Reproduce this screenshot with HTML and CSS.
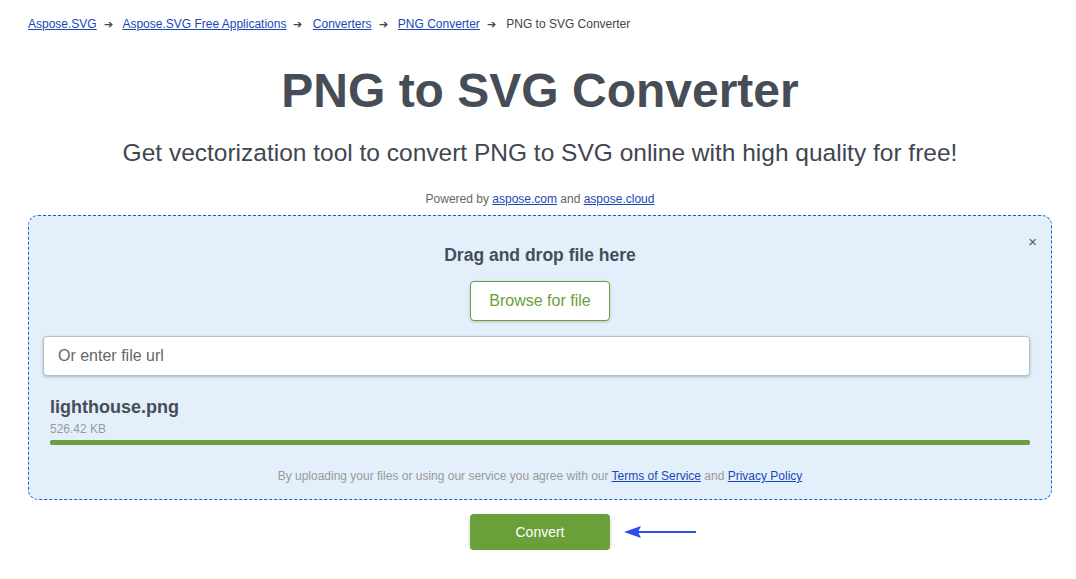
FILE: index.html
```html
<!DOCTYPE html>
<html lang="en">
<head>
  <meta charset="UTF-8">
  <meta name="viewport" content="width=device-width, initial-scale=1.0">
  <title>PNG to SVG Converter</title>
  <link rel="stylesheet" href="styles.css">
</head>
<body>
  <div class="page">
    <nav class="breadcrumbs">
      <a href="#">Aspose.SVG</a><span class="sep">&#x2794;</span>
      <a href="#">Aspose.SVG Free Applications</a><span class="sep">&#x2794;</span>
      <a href="#">Converters</a><span class="sep">&#x2794;</span>
      <a href="#">PNG Converter</a><span class="sep">&#x2794;</span>
      <span class="current">PNG to SVG Converter</span>
    </nav>

    <h1 class="title">PNG to SVG Converter</h1>
    <h2 class="subtitle">Get vectorization tool to convert PNG to SVG online with high quality for free!</h2>
    <div class="powered">Powered by <a href="#">aspose.com</a> and <a href="#">aspose.cloud</a></div>

    <div class="dropzone">
      <span class="close">&times;</span>
      <div class="drop-label">Drag and drop file here</div>
      <button class="browse">Browse for file</button>
      <input class="url-input" type="text" placeholder="Or enter file url">
      <div class="file">
        <div class="file-name">lighthouse.png</div>
        <div class="file-size">526.42 KB</div>
        <div class="progress"><div class="progress-fill" style="width: 100%"></div></div>
      </div>
      <div class="terms">By uploading your files or using our service you agree with our <a href="#">Terms of Service</a> and <a href="#">Privacy Policy</a></div>
    </div>

    <div class="actions">
      <button class="convert">Convert</button>
      <svg class="pointer" width="74" height="14" viewBox="0 0 74 14">
        <line x1="14" y1="7" x2="72" y2="7" stroke="#2e4df0" stroke-width="2"/>
        <polygon points="0,7 17,1 14,7 17,13" fill="#2e4df0"/>
      </svg>
    </div>
  </div>
</body>
</html>
```

FILE: styles.css
```css
body {
  margin: 0;
  font-family: "Liberation Sans", Arial, sans-serif;
  color: #40464d;
  background: #fff;
}
a {
  color: #1a47b8;
}
.page {
  width: 1024px;
  padding: 16px 0 0 28px;
}
.breadcrumbs {
  font-size: 12px;
  color: #444;
  line-height: 16px;
}
.breadcrumbs .sep {
  margin: 0 7px;
  font-size: 11px;
  color: #444;
}
.title {
  margin: 31px 0 0;
  text-align: center;
  font-size: 48px;
  line-height: 56px;
  font-weight: bold;
  color: #474d57;
}
.subtitle {
  margin: 19px 0 0;
  text-align: center;
  font-size: 24.5px;
  line-height: 30px;
  font-weight: normal;
  color: #3f4650;
}
.powered {
  margin-top: 23px;
  text-align: center;
  font-size: 12px;
  line-height: 16px;
  color: #666;
}
.dropzone {
  position: relative;
  margin-top: 8px;
  border: 1px dashed #1565c0;
  border-radius: 10px;
  background: #e3f0fc;
  padding: 28px 14px 15px 14px;
  display: flex;
  flex-direction: column;
  align-items: center;
}
.close {
  position: absolute;
  top: 17px;
  right: 14px;
  font-size: 15px;
  color: #555a60;
}
.drop-label {
  font-size: 17.5px;
  font-weight: bold;
  line-height: 22px;
  color: #474d57;
}
.browse {
  margin-top: 15px;
  width: 140px;
  height: 40px;
  background: #fff;
  border: 1px solid #6a9f3a;
  border-radius: 4px;
  box-shadow: 0 1px 3px rgba(0, 0, 0, 0.2);
  color: #6a9f3a;
  font-family: inherit;
  font-size: 16px;
}
.url-input {
  box-sizing: border-box;
  align-self: flex-start;
  margin-top: 15px;
  width: 987px;
  height: 40px;
  padding: 0 14px;
  background: #fff;
  border: 1px solid #b9bec4;
  border-radius: 4px;
  box-shadow: 0 1px 3px rgba(0, 0, 0, 0.25);
  font-family: inherit;
  font-size: 16px;
}
.url-input::placeholder {
  color: #666;
}
.file {
  align-self: flex-start;
  width: 980px;
  margin: 20px 0 0 7px;
}
.file-name {
  font-size: 18px;
  font-weight: bold;
  line-height: 22px;
  color: #474d57;
}
.file-size {
  margin-top: 3px;
  font-size: 12px;
  line-height: 16px;
  color: #999;
}
.progress {
  margin-top: 3px;
  height: 5px;
  border-radius: 2px;
  background: #d0d6dc;
}
.progress-fill {
  height: 100%;
  border-radius: 2px;
  background: #6a9f3a;
}
.terms {
  margin-top: 23px;
  font-size: 12px;
  line-height: 16px;
  color: #999;
}
.actions {
  position: relative;
  display: flex;
  justify-content: center;
  margin-top: 14px;
}
.convert {
  width: 140px;
  height: 36px;
  background: #6a9f3a;
  border: none;
  border-radius: 4px;
  box-shadow: 0 2px 4px rgba(0, 0, 0, 0.2);
  color: #fff;
  font-family: inherit;
  font-size: 14px;
}
.pointer {
  position: absolute;
  left: 596px;
  top: 11px;
}
```
